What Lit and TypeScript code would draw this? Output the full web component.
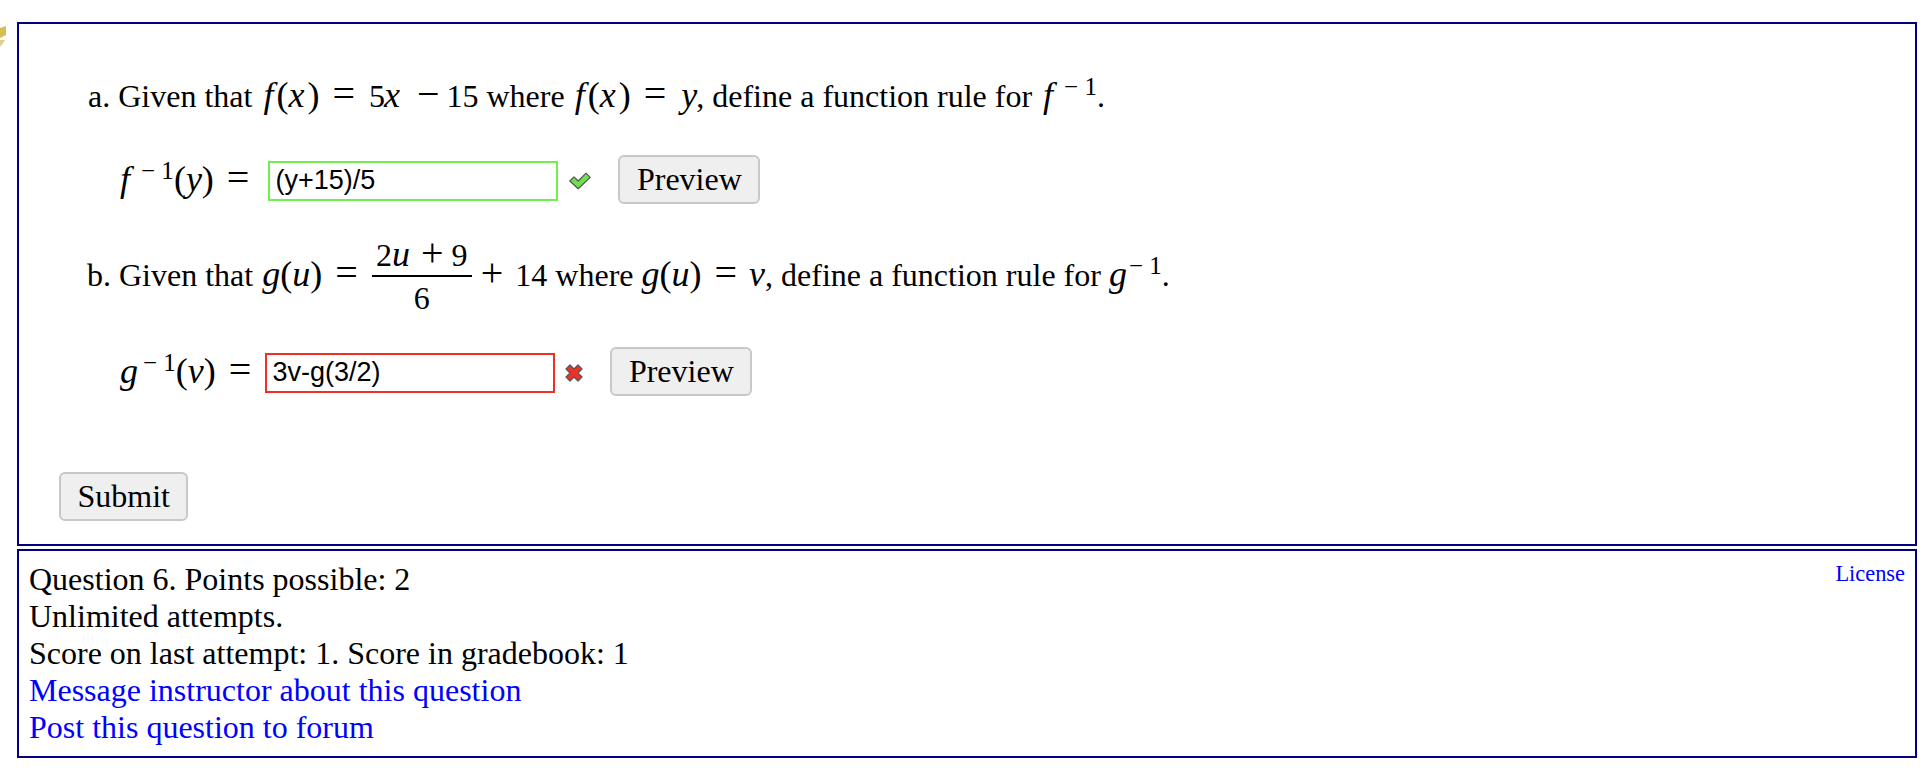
import { LitElement, html, css } from "lit";
import { customElement } from "lit/decorators.js";

const sup = html`<span class="sup">− 1</span>`;

@customElement("app-root")
export class AppRoot extends LitElement {
  static styles = css`
    :host { display: block; position: relative; background: #fff; font-family: "Liberation Serif", "Times New Roman", serif; font-size: 32px; color: #000; height: 771px; overflow: hidden; }
    .page { padding: 22px 9px 0 17px; display: flex; flex-direction: column; gap: 3px; }
    .box { border: 2px solid #000080; box-sizing: border-box; }
    .problem { height: 524px; padding: 54px 0 0 40px; display: flex; flex-direction: column; align-items: flex-start; }
    .line { white-space: pre; height: 37px; line-height: 37px; }
    .a { margin-left: 29px; }
    .row { display: flex; align-items: center; white-space: pre; line-height: 37px; }
    .expr { height: 37px; margin-top: 2px; }
    .ans { height: 49px; margin-top: 40px; margin-left: 61px; }
    .b { height: 85px; margin-top: 30px; margin-left: 28px; }
    .b .expr { margin-top: -2px; }
    .ans2 { height: 49px; margin-top: 28px; margin-left: 61px; }
    .m { font-style: italic; font-size: 36px; letter-spacing: 3px; line-height: 0; }
    .m0 { letter-spacing: 0; }
    .tight { letter-spacing: -1px; margin-left: 3px; }
    .wide { letter-spacing: 4px; margin-left: -1px; }
    .fs { margin-right: 6px; }
    .p { font-size: 36px; line-height: 0; }
    .op { font-size: 40px; line-height: 0; margin: 0 12px 0 13px; }
    .eq5 { margin-right: 14px; }
    .minus { margin-right: 7px; }
    .plus { margin-left: 9px; }
    .lead { margin-left: 3px; }
    .lead2 { margin-left: 2px; }
    .lead1 { margin-left: 1px; }
    .lead3 { margin-left: 3px; }
    .sup { font-size: 25px; line-height: 0; vertical-align: 12px; margin-left: 2px; }
    .field { box-sizing: border-box; width: 290px; height: 40px; border: 2px solid; font: 27px "Liberation Sans", Arial, sans-serif; padding: 0 5px; display: flex; align-items: center; margin-top: 2px; }
    .good { border-color: #70f04f; margin-left: 7px; }
    .bad { border-color: #ee3124; margin-left: 2px; }
    .check { width: 24px; height: 24px; margin-left: 10px; flex: none; margin-top: 2px; }
    .cross { width: 20px; height: 20px; margin-left: 9px; flex: none; margin-top: 2px; }
    .btn { box-sizing: border-box; height: 49px; padding: 0 16.5px; background: #efefef; border: 2px solid #c8c8c8; border-radius: 6px; font: 32px "Liberation Serif", serif; color: #000; display: flex; align-items: center; }
    .prev { margin-left: 26px; }
    .submit { margin-top: 76px; }
    .frac { display: flex; flex-direction: column; align-items: center; width: 100px; margin: 0 0 0 2px; }
    .num { border-bottom: 2px solid #000; width: 100%; height: 40px; text-align: center; box-sizing: border-box; }
    .num .op { margin: 0 8px; }
    .den { height: 40px; padding-top: 3px; box-sizing: border-box; }
    .info { height: 209px; padding: 10px; line-height: 37px; }
    .license { float: right; font-size: 22.4px; line-height: 26px; color: #0000ff; }
    .info a { color: #0000ff; text-decoration: none; }
    .info div { height: 37px; }
    .sliver { position: absolute; left: 0; top: 26px; width: 6px; height: 20px; }
  `;

  render() {
    return html`
      <svg class="sliver" viewBox="0 0 6 20"><path d="M0 2 L6 0 V9 L0 12 Z" fill="#d8bd55"/><path d="M0 14 L5 14 L1 20 H0 Z" fill="#e3cf85"/></svg>
      <div class="page">
        <div class="box problem">
          <div class="line a">a. Given that <span class="m lead">f</span><span class="p">(</span><span class="m">x</span><span class="p">)</span><span class="op eq5">=</span>5<span class="m wide">x</span><span class="op minus">−</span>15 where <span class="m lead2">f</span><span class="p">(</span><span class="m">x</span><span class="p">)</span><span class="op">=</span><span class="m tight">y</span>, define a function rule for <span class="m fs lead3">f</span>${sup}.</div>
          <div class="row ans">
            <span class="expr"><span class="m fs">f</span>${sup}<span class="p">(</span><span class="m m0">y</span><span class="p">)</span><span class="op">=</span></span>
            <div class="field good">(y+15)/5</div>
            <svg class="check" viewBox="0 0 20 20"><path d="M1.5 10 L5 6.5 L8.5 10 L15 3.5 L18.5 7 L8.5 16.5 Z" fill="#6fe04f" stroke="#555" stroke-width="1" stroke-linejoin="round"/></svg>
            <div class="btn prev">Preview</div>
          </div>
          <div class="row b">
            <span class="expr">b. Given that <span class="m m0 lead1">g</span><span class="p">(</span><span class="m m0">u</span><span class="p">)</span><span class="op">=</span></span>
            <span class="frac"><span class="num">2<span class="m">u</span><span class="op">+</span>9</span><span class="den">6</span></span>
            <span class="expr"><span class="op plus">+</span>14 where <span class="m m0">g</span><span class="p">(</span><span class="m m0">u</span><span class="p">)</span><span class="op">=</span><span class="m m0">v</span>, define a function rule for <span class="m m0">g</span>${sup}.</span>
          </div>
          <div class="row ans2">
            <span class="expr"><span class="m">g</span>${sup}<span class="p">(</span><span class="m m0">v</span><span class="p">)</span><span class="op">=</span></span>
            <div class="field bad">3v-g(3/2)</div>
            <svg class="cross" viewBox="0 0 20 20"><path d="M2 6 L6 2 L10 6 L14 2 L18 6 L14 10 L18 14 L14 18 L10 14 L6 18 L2 14 L6 10 Z" fill="#ee3124" stroke="#555" stroke-width="1.2" stroke-linejoin="round"/></svg>
            <div class="btn prev">Preview</div>
          </div>
          <div class="btn submit">Submit</div>
        </div>
        <div class="box info">
          <a class="license" href="#">License</a>
          <div>Question 6. Points possible: 2</div>
          <div>Unlimited attempts.</div>
          <div>Score on last attempt: 1. Score in gradebook: 1</div>
          <div><a href="#">Message instructor about this question</a></div>
          <div><a href="#">Post this question to forum</a></div>
        </div>
      </div>
    `;
  }
}
